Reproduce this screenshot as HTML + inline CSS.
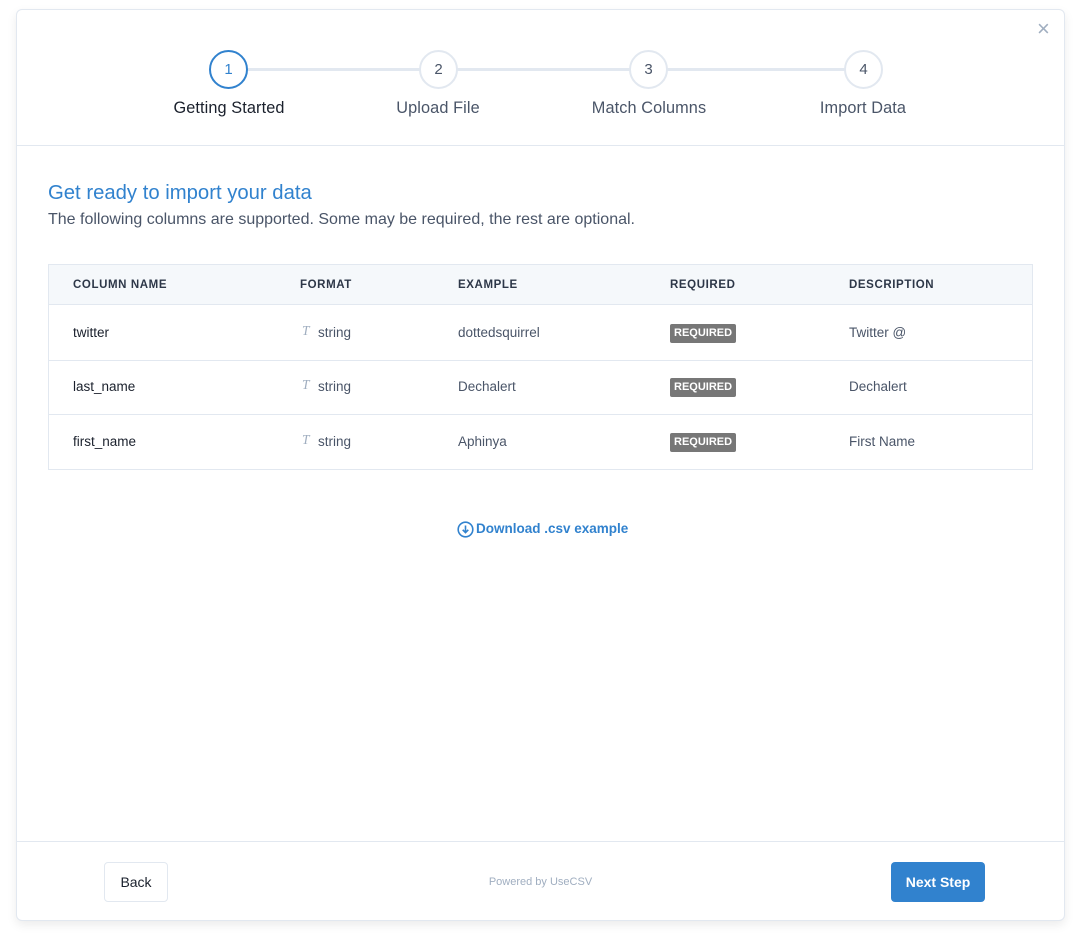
<!DOCTYPE html>
<html><head><style>
*{box-sizing:border-box;margin:0;padding:0}
body{width:1077px;height:941px;background:#fff;font-family:"Liberation Sans",sans-serif;position:relative;overflow:hidden}
.card{position:absolute;left:16px;top:9px;width:1049px;height:912px;border:1px solid #e2e8f0;border-radius:6px;box-shadow:0 4px 10px rgba(0,0,0,.08);background:#fff}
.abs{position:absolute}
.circ{position:absolute;width:39px;height:39px;border-radius:50%;border:2px solid #e2e8f0;background:#fff;color:#4a5568;font-size:15px;text-align:center;line-height:35px}
.lbl{position:absolute;font-size:16.3px;color:#4a5568;transform:translateX(-50%);white-space:nowrap;top:99px;letter-spacing:.1px}
.line{position:absolute;top:68px;height:3px;background:#e2e8f0}
.th{position:absolute;top:279px;font-size:11.5px;font-weight:bold;letter-spacing:.6px;color:#2d3748}
.td{position:absolute;font-size:13.5px;color:#4a5568}
.badge{position:absolute;background:#777;color:#fff;font-size:11px;font-weight:bold;padding:3px 4px;border-radius:2px;line-height:13px}
</style></head><body>
<div class="card"></div>
<div class="abs" style="left:1037px;top:18px;color:#a0aec0;font-size:22px;line-height:22px">×</div>
<div class="line" style="left:248px;width:172px"></div>
<div class="line" style="left:457px;width:173px"></div>
<div class="line" style="left:667px;width:178px"></div>
<div class="circ" style="left:209px;top:50px;border-color:#3182ce;color:#3182ce">1</div>
<div class="circ" style="left:419px;top:50px">2</div>
<div class="circ" style="left:629px;top:50px">3</div>
<div class="circ" style="left:844px;top:50px">4</div>
<div class="lbl" style="left:229px;color:#1a202c">Getting Started</div>
<div class="lbl" style="left:438px">Upload File</div>
<div class="lbl" style="left:649px">Match Columns</div>
<div class="lbl" style="left:863px">Import Data</div>
<div class="abs" style="left:16px;top:145px;width:1049px;height:1px;background:#e2e8f0"></div>
<div class="abs" style="left:48px;top:182px;font-size:20.3px;color:#3182ce">Get ready to import your data</div>
<div class="abs" style="left:48px;top:211px;font-size:16px;color:#4a5568">The following columns are supported. Some may be required, the rest are optional.</div>
<div class="abs" style="left:48px;top:264px;width:985px;height:206px;border:1px solid #e2e8f0"></div>
<div class="abs" style="left:49px;top:265px;width:983px;height:40px;background:#f5f8fb;border-bottom:1px solid #e2e8f0"></div>
<div class="abs" style="left:49px;top:360px;width:983px;height:1px;background:#e2e8f0"></div>
<div class="abs" style="left:49px;top:414px;width:983px;height:1px;background:#e2e8f0"></div>
<div class="th" style="left:73px">COLUMN NAME</div><div class="th" style="left:300px">FORMAT</div><div class="th" style="left:458px">EXAMPLE</div><div class="th" style="left:670px">REQUIRED</div><div class="th" style="left:849px">DESCRIPTION</div>

<div class="td" style="left:73px;top:325px;color:#1a202c">twitter</div>
<div class="td" style="left:302px;top:323px;color:#a0aec0;font-family:'Liberation Serif',serif;font-style:italic">T</div><div class="td" style="left:318px;top:325px">string</div>
<div class="td" style="left:458px;top:325px">dottedsquirrel</div>
<div class="badge" style="left:670px;top:324px">REQUIRED</div>
<div class="td" style="left:849px;top:325px">Twitter @</div>

<div class="td" style="left:73px;top:379px;color:#1a202c">last_name</div>
<div class="td" style="left:302px;top:377px;color:#a0aec0;font-family:'Liberation Serif',serif;font-style:italic">T</div><div class="td" style="left:318px;top:379px">string</div>
<div class="td" style="left:458px;top:379px">Dechalert</div>
<div class="badge" style="left:670px;top:378px">REQUIRED</div>
<div class="td" style="left:849px;top:379px">Dechalert</div>

<div class="td" style="left:73px;top:434px;color:#1a202c">first_name</div>
<div class="td" style="left:302px;top:432px;color:#a0aec0;font-family:'Liberation Serif',serif;font-style:italic">T</div><div class="td" style="left:318px;top:434px">string</div>
<div class="td" style="left:458px;top:434px">Aphinya</div>
<div class="badge" style="left:670px;top:433px">REQUIRED</div>
<div class="td" style="left:849px;top:434px">First Name</div>

<svg class="abs" style="left:457px;top:521px" width="17" height="17" viewBox="0 0 17 17"><circle cx="8.5" cy="8.5" r="7.3" fill="none" stroke="#3182ce" stroke-width="1.6"/><path d="M8.5 4.5v7M5.7 8.8l2.8 2.8 2.8-2.8" fill="none" stroke="#3182ce" stroke-width="1.6"/></svg>
<div class="abs" style="left:476px;top:521px;font-size:13.5px;color:#3182ce;font-weight:bold">Download .csv example</div>

<div class="abs" style="left:16px;top:841px;width:1049px;height:1px;background:#e2e8f0"></div>
<div class="abs" style="left:104px;top:862px;width:64px;height:40px;border:1px solid #e2e8f0;border-radius:4px;font-size:14px;color:#1a202c;text-align:center;line-height:38px">Back</div>
<div class="abs" style="left:0;width:1081px;top:876px;text-align:center;font-size:11px;color:#a0aec0">Powered by UseCSV</div>
<div class="abs" style="left:891px;top:862px;width:94px;height:40px;background:#3182ce;border-radius:4px;font-size:14px;font-weight:bold;color:#fff;text-align:center;line-height:40px">Next Step</div>
</body></html>
